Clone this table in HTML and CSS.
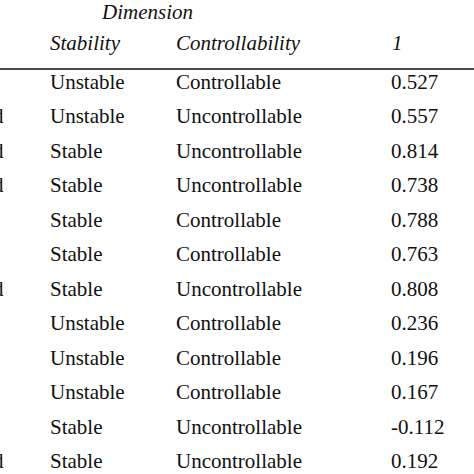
FILE: index.html
```html
<!DOCTYPE html>
<html>
<head>
<meta charset="utf-8">
<link rel="stylesheet" href="styles.css">
</head>
<body>
<div class="table">
  <div class="row head-top">
    <div class="cell cut"></div>
    <div class="cell dim">Dimension</div>
  </div>
  <div class="row head">
    <div class="cell cut"></div>
    <div class="cell">Stability</div>
    <div class="cell">Controllability</div>
    <div class="cell">1</div>
  </div>
  <div class="row"><div class="cell cut"></div><div class="cell">Unstable</div><div class="cell">Controllable</div><div class="cell">0.527</div></div>
  <div class="row"><div class="cell cut"><span>d</span></div><div class="cell">Unstable</div><div class="cell">Uncontrollable</div><div class="cell">0.557</div></div>
  <div class="row"><div class="cell cut"><span>d</span></div><div class="cell">Stable</div><div class="cell">Uncontrollable</div><div class="cell">0.814</div></div>
  <div class="row"><div class="cell cut"><span>d</span></div><div class="cell">Stable</div><div class="cell">Uncontrollable</div><div class="cell">0.738</div></div>
  <div class="row"><div class="cell cut"></div><div class="cell">Stable</div><div class="cell">Controllable</div><div class="cell">0.788</div></div>
  <div class="row"><div class="cell cut"></div><div class="cell">Stable</div><div class="cell">Controllable</div><div class="cell">0.763</div></div>
  <div class="row"><div class="cell cut"><span>d</span></div><div class="cell">Stable</div><div class="cell">Uncontrollable</div><div class="cell">0.808</div></div>
  <div class="row"><div class="cell cut"></div><div class="cell">Unstable</div><div class="cell">Controllable</div><div class="cell">0.236</div></div>
  <div class="row"><div class="cell cut"></div><div class="cell">Unstable</div><div class="cell">Controllable</div><div class="cell">0.196</div></div>
  <div class="row"><div class="cell cut"></div><div class="cell">Unstable</div><div class="cell">Controllable</div><div class="cell">0.167</div></div>
  <div class="row"><div class="cell cut"></div><div class="cell">Stable</div><div class="cell">Uncontrollable</div><div class="cell">-0.112</div></div>
  <div class="row"><div class="cell cut"><span>d</span></div><div class="cell">Stable</div><div class="cell">Uncontrollable</div><div class="cell">0.192</div></div>
</div>
</body>
</html>
```

FILE: styles.css
```css
html, body {
  margin: 0;
  padding: 0;
  background: #ffffff;
}
body {
  width: 474px;
  height: 474px;
  overflow: hidden;
  font-family: "Liberation Serif", "Times New Roman", serif;
  font-size: 21px;
  color: #111111;
}
.table {
  display: flex;
  flex-direction: column;
}
.row {
  display: grid;
  grid-template-columns: 50px 126px 215px 1fr;
  line-height: 24px;
  height: 34.5px;
  box-sizing: border-box;
}
.cell {
  white-space: nowrap;
}
.cut {
  overflow: hidden;
}
.cut span {
  display: inline-block;
  margin-left: -7px;
}
.head-top {
  height: 24.5px;
}
.dim {
  grid-column: 2 / 5;
  padding-left: 52px;
  font-style: italic;
}
.head {
  height: 45px;
  padding-top: 6px;
  font-style: italic;
  border-bottom: 2px solid #4a4a4a;
}
.head .cell:nth-child(4) {
  padding-left: 1px;
}
```
